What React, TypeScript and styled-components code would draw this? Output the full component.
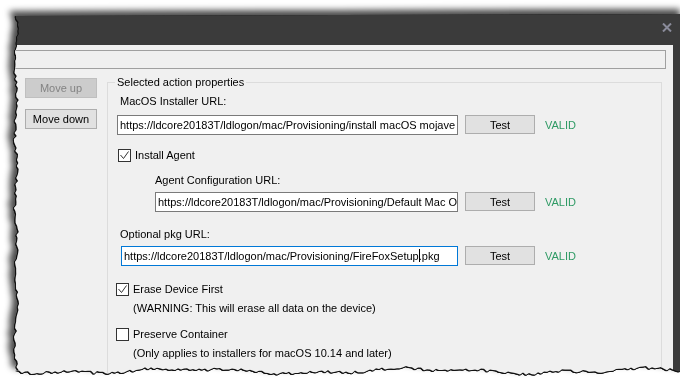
import styled, { createGlobalStyle } from "styled-components";

const GlobalStyle = createGlobalStyle`
  html, body {
    margin: 0;
    padding: 0;
    background: #fff;
  }
  body {
    width: 680px;
    height: 378px;
    overflow: hidden;
    font-family: "Liberation Sans", Arial, sans-serif;
    font-size: 11px;
    color: #000;
  }
`;

const WIN_W = 675;
const WIN_H = 362;

// cheap deterministic noise for the torn paper edge
const noise = (i: number) => {
  const s = Math.sin(i * 127.1 + 311.7) * 43758.5453;
  return s - Math.floor(s);
};

const tornEdge = (() => {
  const pts: string[] = [`${WIN_W}px 0px`, `${WIN_W}px ${WIN_H}px`];
  for (let x = WIN_W; x > 4; x -= 3) {
    const wave = Math.sin(x / 37) * 2 + Math.sin(x / 13) * 1.2;
    const y = WIN_H - 4 + wave - noise(x) * 3;
    pts.push(`${x}px ${y.toFixed(1)}px`);
  }
  for (let y = WIN_H - 6; y >= 0; y -= 3) {
    const x = 5 + Math.sin(y / 11) * 1.2 + noise(y + 1000) * 3;
    pts.push(`${x.toFixed(1)}px ${y}px`);
  }
  return `polygon(${pts.join(", ")})`;
})();

const Frame = styled.div`
  margin: 14px 0 0 10px;
  width: ${WIN_W}px;
  filter: drop-shadow(-1px 0 0 #111) drop-shadow(0 1px 0 #111)
    drop-shadow(-5px -5px 3px rgba(0, 0, 0, 0.7));
`;

const Window = styled.div`
  height: ${WIN_H}px;
  display: flex;
  flex-direction: column;
  background: #3b3b3b;
  clip-path: ${tornEdge};
`;

const TitleBar = styled.div`
  height: 31px;
  flex: none;
  box-sizing: border-box;
  display: flex;
  justify-content: flex-end;
  align-items: flex-start;
  padding: 9px 13px 0 0;
`;

const Body = styled.div`
  flex: 1;
  min-height: 0;
  margin-right: 12px;
  padding: 5px 7px 0 0;
  background: #f0f0f0;
  display: flex;
  flex-direction: column;
  overflow: hidden;
`;

const TopField = styled.div`
  height: 19px;
  flex: none;
  box-sizing: border-box;
  border: 1px solid #a0a0a0;
  background: #f0f0f0;
`;

const Main = styled.div`
  display: flex;
  align-items: flex-start;
  margin-top: 9px;
  padding: 0 4px 0 15px;
`;

const SideColumn = styled.div`
  flex: none;
  width: 72px;
  margin-right: 10px;
  display: flex;
  flex-direction: column;
  gap: 11px;
`;

const SideButton = styled.button`
  height: 20px;
  width: 72px;
  padding: 0;
  box-sizing: border-box;
  border: 1px solid #adadad;
  background: #e1e1e1;
  font: inherit;
  color: #000;

  &:disabled {
    background: #cccccc;
    border-color: #bfbfbf;
    color: #838383;
  }
`;

const GroupBox = styled.fieldset`
  flex: 1;
  min-width: 0;
  height: 320px;
  margin: -3px 0 0 0;
  padding: 0;
  border: 1px solid #dcdcdc;
  display: flex;
  flex-direction: column;
`;

const Legend = styled.legend`
  margin-left: 7px;
  padding: 0 2px;
  line-height: 14px;
`;

const Caption = styled.div<{ $indent: number; $top: number }>`
  margin: ${(p) => p.$top}px 0 0 ${(p) => p.$indent}px;
  height: 14px;
  line-height: 14px;
  white-space: nowrap;
`;

const UrlRow = styled.div<{ $indent: number; $top: number }>`
  display: flex;
  align-items: flex-start;
  margin: ${(p) => p.$top}px 0 0 ${(p) => p.$indent}px;
`;

const UrlBox = styled.div<{ $width: number; $focused?: boolean }>`
  width: ${(p) => p.$width}px;
  height: 20px;
  box-sizing: border-box;
  border: 1px solid ${(p) => (p.$focused ? "#0078d7" : "#7a7a7a")};
  background: #fff;
  padding: 0 2px;
  line-height: 18px;
  white-space: nowrap;
  overflow: hidden;
`;

const Caret = styled.span`
  display: inline-block;
  width: 1px;
  height: 13px;
  margin-right: -1px;
  background: #000;
  vertical-align: -2px;
`;

const TestButton = styled.button`
  width: 70px;
  height: 19px;
  margin-left: 7px;
  padding: 0;
  box-sizing: border-box;
  border: 1px solid #adadad;
  background: #e1e1e1;
  font: inherit;
  color: #000;
`;

const Valid = styled.span`
  margin-left: 10px;
  line-height: 21px;
  color: #2e9a64;
`;

const CheckRow = styled.div<{ $indent: number; $top: number }>`
  display: flex;
  align-items: center;
  gap: 4px;
  height: 14px;
  margin: ${(p) => p.$top}px 0 0 ${(p) => p.$indent}px;
`;

const Box = styled.span`
  width: 13px;
  height: 13px;
  box-sizing: border-box;
  border: 1px solid #333;
  background: #fff;
  display: flex;
`;

const CloseGlyph = () => (
  <svg width="10" height="9" viewBox="0 0 10 9">
    <path d="M1 0.5 L9 8.5 M9 0.5 L1 8.5" stroke="#8a8b9a" strokeWidth="2" />
  </svg>
);

const CheckBox = ({ checked }: { checked?: boolean }) => (
  <Box>
    {checked && (
      <svg width="11" height="11" viewBox="0 0 11 11">
        <path d="M1.5 5 L4.5 8.5 L9.5 1.5" fill="none" stroke="#333" strokeWidth="1" />
      </svg>
    )}
  </Box>
);

const UrlField = ({
  indent,
  top,
  width,
  focused,
  children,
}: {
  indent: number;
  top: number;
  width: number;
  focused?: boolean;
  children: React.ReactNode;
}) => (
  <UrlRow $indent={indent} $top={top}>
    <UrlBox $width={width} $focused={focused}>
      {children}
    </UrlBox>
    <TestButton>Test</TestButton>
    <Valid>VALID</Valid>
  </UrlRow>
);

const App = () => {
  return (
    <>
      <GlobalStyle />
      <Frame>
        <Window>
          <TitleBar>
            <CloseGlyph />
          </TitleBar>
          <Body>
            <TopField />
            <Main>
              <SideColumn>
                <SideButton disabled>Move up</SideButton>
                <SideButton>Move down</SideButton>
              </SideColumn>
              <GroupBox>
                <Legend>Selected action properties</Legend>
                <Caption $indent={12} $top={5}>
                  MacOS Installer URL:
                </Caption>
                <UrlField indent={9} top={7} width={341}>
                  https://ldcore20183T/ldlogon/mac/Provisioning/install macOS mojave
                </UrlField>
                <CheckRow $indent={10} $top={12}>
                  <CheckBox checked />
                  Install Agent
                </CheckRow>
                <Caption $indent={47} $top={11}>
                  Agent Configuration URL:
                </Caption>
                <UrlField indent={47} top={5} width={303}>
                  https://ldcore20183T/ldlogon/mac/Provisioning/Default Mac OS
                </UrlField>
                <Caption $indent={12} $top={14}>
                  Optional pkg URL:
                </Caption>
                <UrlField indent={13} top={5} width={337} focused>
                  https://ldcore20183T/ldlogon/mac/Provisioning/FireFoxSetup
                  <Caret />
                  .pkg
                </UrlField>
                <CheckRow $indent={8} $top={15}>
                  <CheckBox checked />
                  Erase Device First
                </CheckRow>
                <Caption $indent={25} $top={5}>
                  (WARNING: This will erase all data on the device)
                </Caption>
                <CheckRow $indent={8} $top={12}>
                  <CheckBox />
                  Preserve Container
                </CheckRow>
                <Caption $indent={25} $top={5}>
                  (Only applies to installers for macOS 10.14 and later)
                </Caption>
              </GroupBox>
            </Main>
          </Body>
        </Window>
      </Frame>
    </>
  );
};

export default App;
